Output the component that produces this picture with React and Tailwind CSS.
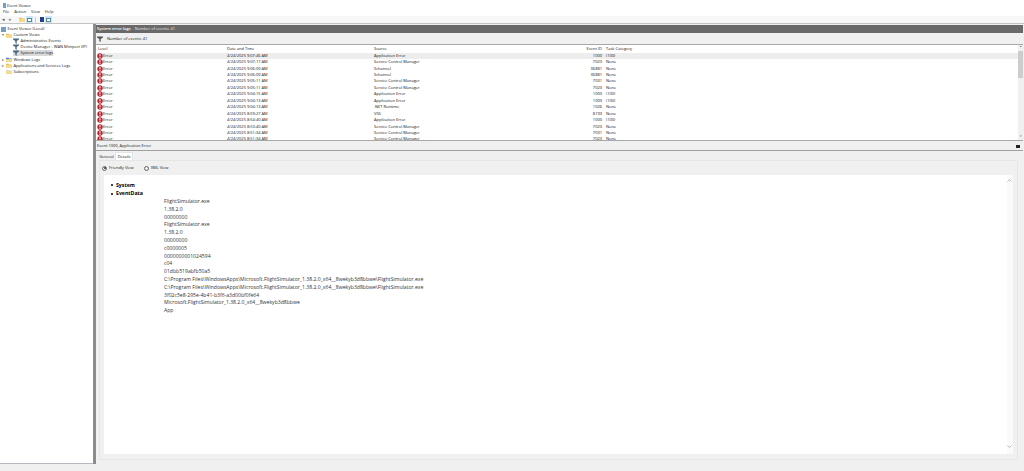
const rows = [
  ["4/24/2025 9:07:46 AM", "Application Error", "1000", "(100)"],
  ["4/24/2025 9:07:17 AM", "Service Control Manager", "7023", "None"],
  ["4/24/2025 9:06:09 AM", "Schannel", "36881", "None"],
  ["4/24/2025 9:06:09 AM", "Schannel", "36881", "None"],
  ["4/24/2025 9:05:11 AM", "Service Control Manager", "7031", "None"],
  ["4/24/2025 9:05:11 AM", "Service Control Manager", "7023", "None"],
  ["4/24/2025 9:04:15 AM", "Application Error", "1000", "(100)"],
  ["4/24/2025 9:04:13 AM", "Application Error", "1000", "(100)"],
  ["4/24/2025 9:04:13 AM", ".NET Runtime", "1026", "None"],
  ["4/24/2025 8:59:27 AM", "VSS", "8193", "None"],
  ["4/24/2025 8:54:40 AM", "Application Error", "1000", "(100)"],
  ["4/24/2025 8:53:40 AM", "Service Control Manager", "7023", "None"],
  ["4/24/2025 8:51:34 AM", "Service Control Manager", "7031", "None"],
  ["4/24/2025 8:51:34 AM", "Service Control Manager", "7023", "None"],
];

const eventData = [
  "FlightSimulator.exe",
  "1.38.2.0",
  "00000000",
  "FlightSimulator.exe",
  "1.38.2.0",
  "00000000",
  "c0000005",
  "0000000001024594",
  "c04",
  "01dbb519abfb50a5",
  "C:\\Program Files\\WindowsApps\\Microsoft.FlightSimulator_1.38.2.0_x64__8wekyb3d8bbwe\\FlightSimulator.exe",
  "C:\\Program Files\\WindowsApps\\Microsoft.FlightSimulator_1.38.2.0_x64__8wekyb3d8bbwe\\FlightSimulator.exe",
  "3f02c5e8-295e-4b41-b3f6-a3d00bf0fe64",
  "Microsoft.FlightSimulator_1.38.2.0_x64__8wekyb3d8bbwe",
  "App",
];

const Funnel = ({ color = "#4a6a8a" }) => (
  <svg width="6" height="6" viewBox="0 0 6 6" className="shrink-0">
    <path d="M0 0.5H6V1.5L3.7 3V6L2.3 5V3L0 1.5Z" fill={color} />
  </svg>
);

const Folder = ({ color = "#e8c050" }) => (
  <svg width="6" height="5" viewBox="0 0 7 6" className="shrink-0">
    <path d="M0 1H3L3.5 1.8H7V6H0Z" fill={color} />
    <path d="M0 2.5H7V6H0Z" fill="#f5dc8c" />
  </svg>
);

const ErrorIcon = () => (
  <svg width="6" height="6" viewBox="0 0 6 6" className="shrink-0">
    <circle cx="3" cy="3" r="2.7" fill="#b8202a" />
    <rect x="2.5" y="1.1" width="1" height="2.4" fill="#fff" />
    <rect x="2.5" y="4" width="1" height="1" fill="#fff" />
  </svg>
);

const TreeRow = ({ indent, arrow, icon, label, selected }) => (
  <div className={`flex h-[6.1px] items-center ${indent}`}>
    {arrow !== undefined && <span className="w-[4px] shrink-0 text-[4px] leading-none text-[#777]">{arrow}</span>}
    <span className={`flex items-center gap-[1.5px] whitespace-nowrap ${selected ? "bg-[#d9d9d9]" : ""}`}>
      {icon}
      {label}
    </span>
  </div>
);

const ToolIcon = ({ active, children }) => (
  <span className={`flex h-[7px] w-[7px] items-center justify-center ${active ? "bg-[#cce4f7]" : ""}`}>{children}</span>
);

export default function App() {
  return (
    <div className="flex h-[471px] w-[1024px] flex-col overflow-hidden bg-[#f0f0f0] font-['Open_Sans',sans-serif] text-[4px] leading-none text-[#111]">
      {/* title bar */}
      <div className="flex h-[8px] items-end bg-white pl-[3px]">
        <span className="mr-[1px] h-[5px] w-[3px] bg-[#7a9cc0]" />
        <span>Event Viewer</span>
      </div>
      {/* menu */}
      <div className="flex h-[8px] items-center gap-[5px] bg-white pl-[3px]">
        <span>File</span>
        <span>Action</span>
        <span>View</span>
        <span>Help</span>
      </div>
      {/* toolbar */}
      <div className="flex h-[8px] items-center border-b border-[#c4c4c4] bg-[#f7f7f7] pl-[2px]">
        <span className="w-[7px] text-[5px] text-[#555]">◂</span>
        <span className="w-[9px] text-[5px] text-[#888]">▸</span>
        <ToolIcon><Folder /></ToolIcon>
        <span className="w-px" />
        <ToolIcon active><span className="h-[4px] w-[5px] border border-[#4f8f9c] bg-white" /></ToolIcon>
        <span className="mx-[2px] h-[6px] w-px bg-[#ccc]" />
        <ToolIcon><span className="h-[5px] w-[4px] bg-[#27408b]" /></ToolIcon>
        <ToolIcon active><span className="h-[4px] w-[5px] border border-[#4f8f9c] bg-white" /></ToolIcon>
      </div>

      <div className="flex min-h-0 flex-1">
        {/* tree */}
        <div className="w-[93px] shrink-0 border-b border-[#b8b8c0] bg-white pl-px pt-[2px]">
          <TreeRow indent="" icon={<span className="h-[5px] w-[5px] bg-[#7a9cc0]" />} label="Event Viewer (Local)" />
          <TreeRow indent="pl-[1px]" arrow="▾" icon={<Folder />} label="Custom Views" />
          <TreeRow indent="pl-[12px]" icon={<Funnel />} label="Administrative Events" />
          <TreeRow indent="pl-[12px]" icon={<Funnel />} label="Device Manager - WAN Miniport (IP)" />
          <TreeRow indent="pl-[12px]" icon={<Funnel />} label="System error logs" selected />
          <TreeRow indent="pl-[1px]" arrow="▸" icon={<Folder color="#3c78d8" />} label="Windows Logs" />
          <TreeRow indent="pl-[1px]" arrow="▸" icon={<Folder />} label="Applications and Services Logs" />
          <TreeRow indent="pl-[5px]" icon={<Folder color="#d8d8d8" />} label="Subscriptions" />
        </div>
        {/* splitter */}
        <div className="w-[3px] shrink-0 bg-[#8c8c8c]" />

        {/* right side */}
        <div className="flex min-w-0 flex-1 flex-col pr-px pt-px">
          <div className="flex h-[8px] shrink-0 items-center gap-[4px] bg-[#696969] pl-[1px] text-white">
            <span className="font-semibold">System error logs</span>
            <span className="text-[#e4e4e4]">Number of events: 41</span>
          </div>
          <div className="flex h-[11px] shrink-0 items-center bg-[#f0f0f0] pl-[1px]">
            <Funnel color="#555" />
            <span className="ml-[4px]">Number of events: 41</span>
          </div>

          {/* events list */}
          <div className="flex h-[97px] shrink-0 border-y border-[#a8a8a8] bg-white pl-px">
            <div className="min-w-0 flex-1 overflow-hidden">
              <div className="flex h-[7.5px] items-center whitespace-nowrap">
                <span className="w-[130px] pl-[1px]">Level</span>
                <span className="w-[147px]">Date and Time</span>
                <span className="w-[212px]">Source</span>
                <span className="w-[16px] text-right">Event ID</span>
                <span className="pl-[4px]">Task Category</span>
              </div>
              {rows.map((row, i) => (
                <div key={i} className={`flex h-[6.45px] items-center whitespace-nowrap ${i === 0 ? "bg-[#ededed]" : ""}`}>
                  <span className="flex w-[130px] items-center">
                    <ErrorIcon />
                    Error
                  </span>
                  <span className="w-[147px]">{row[0]}</span>
                  <span className="w-[212px]">{row[1]}</span>
                  <span className="w-[16px] text-right">{row[2]}</span>
                  <span className="pl-[4px]">{row[3]}</span>
                </div>
              ))}
            </div>
            <div className="flex w-[5px] shrink-0 flex-col bg-[#f0f0f0]">
              <span className="h-[6px] text-center text-[3px] text-[#555]">▴</span>
              <span className="h-[27px] bg-[#cdcdcd]" />
              <span className="flex-1" />
              <span className="h-[5px] text-center text-[3px] text-[#555]">▾</span>
            </div>
          </div>

          {/* event detail */}
          <div className="flex h-[10px] shrink-0 items-center justify-between border-b border-[#a0a0a0] pl-[1px] pr-[3px] pt-[1px]">
            <span>Event 1000, Application Error</span>
            <span className="h-[3px] w-[4px] bg-[#222]" />
          </div>
          <div className="flex h-[9px] shrink-0 items-end pl-[2px]">
            <span className="flex h-[7px] w-[17px] items-center justify-center">General</span>
            <span className="flex h-[8px] w-[18px] items-center justify-center border border-b-0 border-[#e4e4e4] bg-white">Details</span>
          </div>
          <div className="ml-[3px] mr-[5px] flex min-h-0 flex-1 flex-col border border-[#e6e6e6] pb-[5px] pl-[4px] pr-[4.5px]">
            <div className="-ml-[2px] flex h-[14px] shrink-0 items-center gap-[10px]">
              <span className="flex items-center gap-[2px]">
                <span className="flex h-[5px] w-[5px] items-center justify-center rounded-full border-[0.5px] border-[#666]">
                  <span className="h-[2px] w-[2px] rounded-full bg-[#333]" />
                </span>
                Friendly View
              </span>
              <span className="flex items-center gap-[2px]">
                <span className="h-[5px] w-[5px] rounded-full border-[0.5px] border-[#666]" />
                XML View
              </span>
            </div>
            <div className="flex min-h-0 flex-1 bg-white">
              <div className="min-w-0 flex-1 pl-[6.5px] pt-[6px]">
                <div className="flex h-[8.5px] items-center gap-[3.5px] text-[5.2px] font-bold text-black">
                  <span className="h-[2px] w-[2px] bg-[#444]" />
                  System
                </div>
                <div className="flex h-[8.5px] items-center gap-[3.5px] text-[5.2px] font-bold text-black">
                  <span className="h-[2px] w-[2px] bg-[#444]" />
                  EventData
                </div>
                <div className="pl-[53.5px] text-[5.1px] leading-[7.79px] text-[#333]">
                  {eventData.map((line, i) => (
                    <div key={i} className="whitespace-nowrap">{line}</div>
                  ))}
                </div>
              </div>
              <div className="flex w-[5.5px] shrink-0 flex-col justify-between bg-[#fafafa] py-[4px] pb-[6px]">
                <svg width="5" height="3" viewBox="0 0 5 3"><path d="M0.5 2.5L2.5 0.5L4.5 2.5" fill="none" stroke="#aaa" strokeWidth="0.8" /></svg>
                <svg width="5" height="3" viewBox="0 0 5 3"><path d="M0.5 0.5L2.5 2.5L4.5 0.5" fill="none" stroke="#aaa" strokeWidth="0.8" /></svg>
              </div>
            </div>
          </div>
          <div className="h-[4px] shrink-0" />
        </div>
      </div>
      {/* status bar */}
      <div className="h-[7px] shrink-0 bg-[#f0f0f0]" />
    </div>
  );
}
